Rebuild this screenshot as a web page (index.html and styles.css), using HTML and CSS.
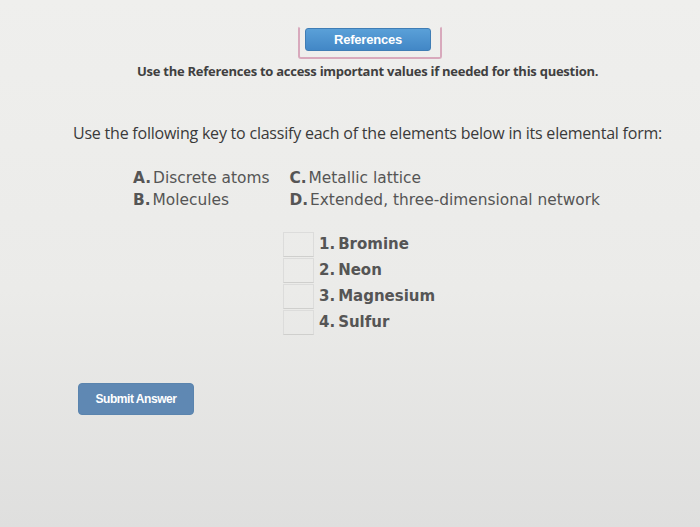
FILE: index.html
```html
<!DOCTYPE html>
<html>
<head>
<meta charset="utf-8">
<link rel="stylesheet" href="styles.css">
</head>
<body>
<div class="page">
  <div class="ref-row">
    <div class="ref-ring">
      <button class="ref-btn">References</button>
    </div>
  </div>
  <p class="notice">Use the References to access important values if needed for this question.</p>
  <p class="question">Use the following key to classify each of the elements below in its elemental form:</p>
  <div class="key">
    <div class="key-col">
      <div><b>A.</b>Discrete atoms</div>
      <div><b>B.</b>Molecules</div>
    </div>
    <div class="key-col">
      <div><b>C.</b>Metallic lattice</div>
      <div><b>D.</b>Extended, three-dimensional network</div>
    </div>
  </div>
  <div class="items">
    <div class="item"><span class="box"></span><span class="label">1.&thinsp;Bromine</span></div>
    <div class="item"><span class="box"></span><span class="label">2.&thinsp;Neon</span></div>
    <div class="item"><span class="box"></span><span class="label">3.&thinsp;Magnesium</span></div>
    <div class="item"><span class="box"></span><span class="label">4.&thinsp;Sulfur</span></div>
  </div>
  <div class="submit-row">
    <button class="submit">Submit Answer</button>
  </div>
</div>
</body>
</html>
```
FILE: styles.css
```css
html, body {
  margin: 0;
  padding: 0;
}
body {
  width: 700px;
  height: 527px;
  overflow: hidden;
  background: linear-gradient(180deg, #efefed 0%, #ebebe9 55%, #dfdfde 100%);
  font-family: "Open Sans", "DejaVu Sans", sans-serif;
  color: #3f3f3f;
}
.page {
  display: flex;
  flex-direction: column;
  padding-top: 26px;
}
.ref-row {
  padding-left: 298px;
}
.ref-ring {
  width: 135px;
  height: 29px;
  border: 2px solid #d8a9bc;
  border-top-color: transparent;
  border-radius: 3px;
  padding: 0 0 0 5px;
  box-sizing: content-box;
}
.ref-btn {
  display: block;
  margin-top: 0;
  width: 126px;
  height: 23px;
  border: 1px solid #3f7db5;
  border-radius: 3px;
  background: linear-gradient(180deg, #5aa0d8 0%, #4287c6 100%);
  color: #ffffff;
  font-family: "Liberation Sans", Arial, sans-serif;
  font-weight: bold;
  font-size: 13px;
  padding: 0;
  letter-spacing: -0.2px;
}
.notice {
  margin: 3px 0 0 137px;
  font-weight: bold;
  font-size: 13px;
  line-height: 18px;
  color: #404040;
  letter-spacing: -0.26px;
}
.question {
  margin: 42px 0 0 73px;
  font-size: 16px;
  line-height: 22px;
  color: #3a3a3a;
  letter-spacing: -0.22px;
}
.key {
  display: flex;
  gap: 20px;
  margin: 23px 0 0 133px;
  font-family: "DejaVu Sans", Verdana, sans-serif;
  font-size: 15.4px;
  line-height: 22px;
  color: #555555;
}
.key b {
  margin-right: 2px;
}
.key-col {
  display: flex;
  flex-direction: column;
}
.items {
  display: flex;
  flex-direction: column;
  margin: 20px 0 0 283px;
}
.item {
  display: flex;
  align-items: center;
  height: 26px;
}
.box {
  width: 31px;
  height: 25px;
  border: 1px solid #dcdcdb;
  border-bottom-color: #cfcfcd;
  box-sizing: border-box;
  margin-right: 5px;
}
.label {
  font-family: "DejaVu Sans", Verdana, sans-serif;
  font-weight: bold;
  font-size: 15px;
  color: #555555;
}
.submit-row {
  margin: 48px 0 0 78px;
}
.submit {
  width: 116px;
  height: 32px;
  border: 1px solid #5a84ae;
  border-radius: 4px;
  background: #5f88b3;
  color: #ffffff;
  font-family: "Liberation Sans", Arial, sans-serif;
  font-size: 12px;
  font-weight: bold;
  padding: 0;
  letter-spacing: -0.45px;
}
```
